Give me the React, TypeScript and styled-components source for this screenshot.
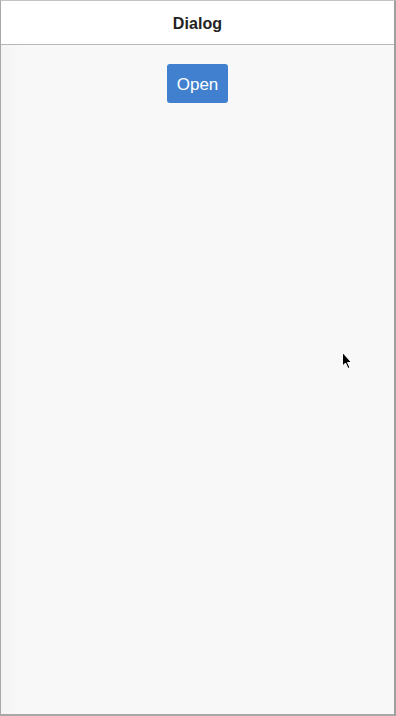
import React from 'react';
import styled, { createGlobalStyle } from 'styled-components';

const GlobalStyle = createGlobalStyle`
  html, body {
    margin: 0;
    padding: 0;
    background: #ffffff;
  }
  body {
    font-family: "Liberation Sans", Arial, sans-serif;
  }
`;

const Frame = styled.div`
  position: relative;
  box-sizing: border-box;
  width: 396px;
  height: 716px;
  display: flex;
  flex-direction: column;
  border-top: 1px solid #c4c4c4;
  border-left: 1px solid #a8a8a8;
  border-right: 2px solid #a0a0a0;
  border-bottom: 2px solid #a8a8a8;
  overflow: hidden;
`;

const NavBar = styled.header`
  box-sizing: border-box;
  height: 44px;
  flex: none;
  display: flex;
  align-items: center;
  justify-content: center;
  padding-top: 2px;
  background: #ffffff;
  border-bottom: 1px solid #b8b8b8;
`;

const Title = styled.h1`
  margin: 0;
  font-size: 16px;
  font-weight: 700;
  color: #222222;
  letter-spacing: 0.1px;
`;

const Content = styled.main`
  flex: 1;
  display: flex;
  flex-direction: column;
  align-items: center;
  padding-top: 19px;
  background: linear-gradient(to right, #f3f3f3 0px, #f8f8f8 18px, #f8f8f8 100%);
`;

const Button = styled.button`
  box-sizing: border-box;
  width: 61px;
  height: 39px;
  padding: 2px 0 0;
  border: none;
  border-radius: 3px;
  background: #4080ce;
  color: #ffffff;
  font-family: "Liberation Sans", Arial, sans-serif;
  font-size: 17px;
  cursor: pointer;
`;

const Pointer = styled.svg`
  position: absolute;
  left: 340px;
  top: 350px;
  pointer-events: none;
`;

export default function App() {
  return (
    <>
      <GlobalStyle />
      <Frame>
        <NavBar>
          <Title>Dialog</Title>
        </NavBar>
        <Content>
          <Button>Open</Button>
        </Content>
        <Pointer width="14" height="20" viewBox="0 0 14 20">
          <path
            d="M1.5 1.5 L1.5 15 L4.5 12 L7 17.5 L9 16.5 L6.5 11.5 L10.5 11.5 Z"
            fill="#000"
            stroke="#fff"
            strokeWidth="1"
            strokeLinejoin="round"
          />
        </Pointer>
      </Frame>
    </>
  );
}
